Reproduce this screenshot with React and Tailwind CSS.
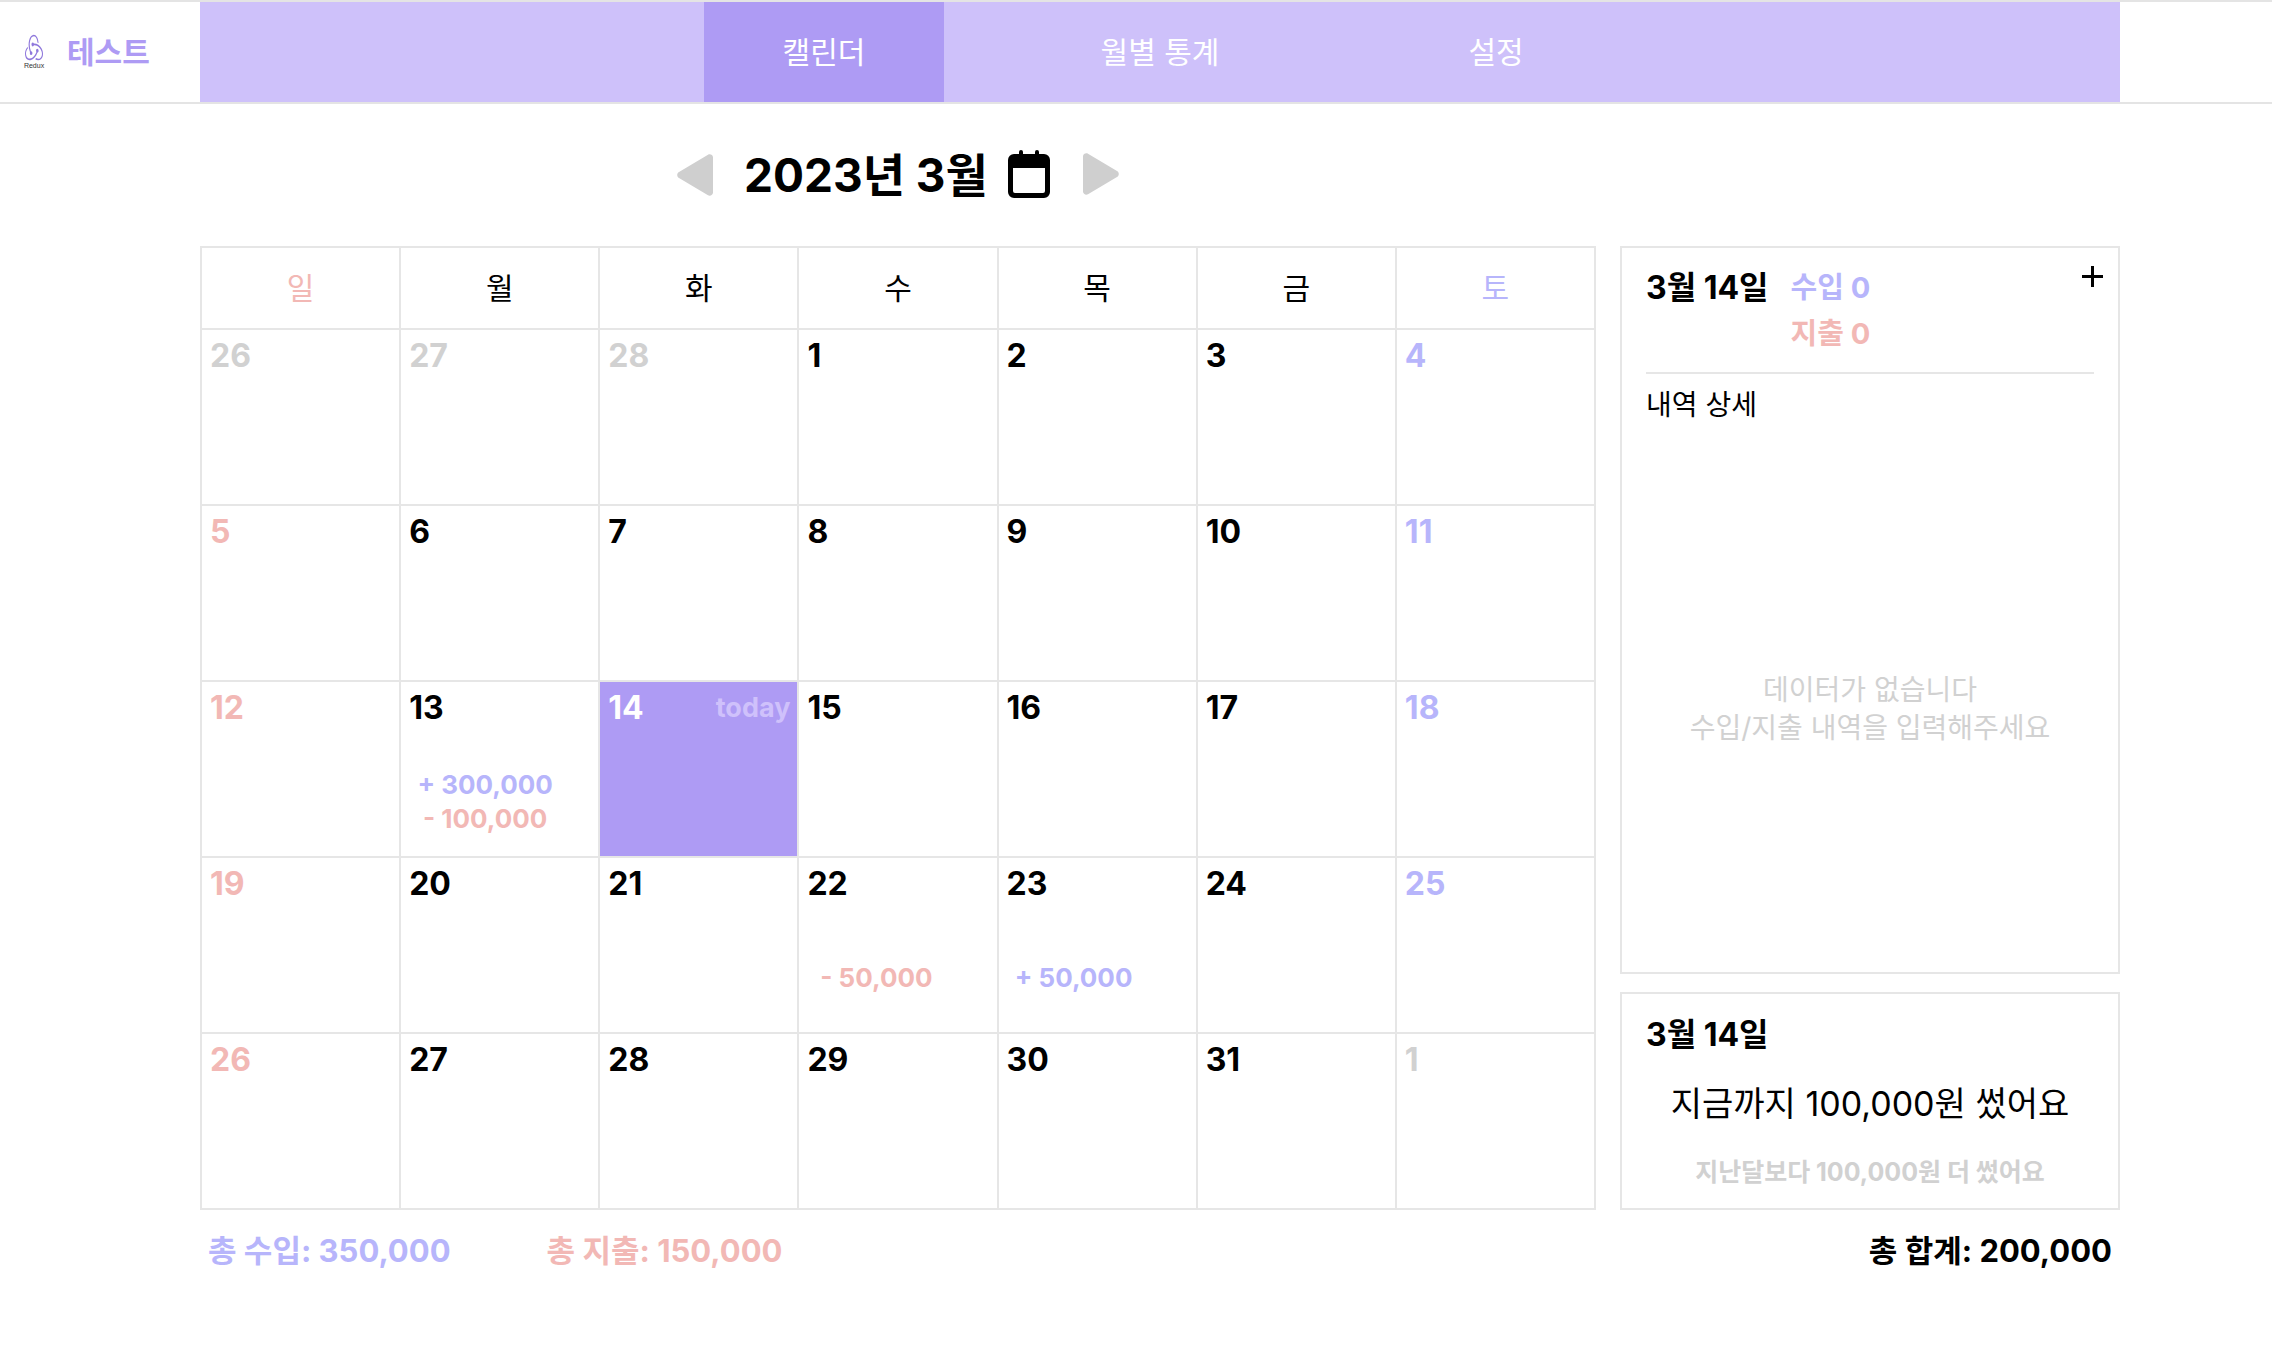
import { SiRedux } from "react-icons/si";

const DOW = [
  ["일", "text-[#f2b8b5]"], ["월", "text-black"], ["화", "text-black"], ["수", "text-black"],
  ["목", "text-black"], ["금", "text-black"], ["토", "text-[#b7b5fb]"],
];
const weeks = [
  [26, 27, 28, 1, 2, 3, 4],
  [5, 6, 7, 8, 9, 10, 11],
  [12, 13, 14, 15, 16, 17, 18],
  [19, 20, 21, 22, 23, 24, 25],
  [26, 27, 28, 29, 30, 31, 1],
];
const entries = {
  "2-1": { w: "w-[168px]", rows: [["+ 300,000", "text-[#b7b5fb]"], ["- 100,000", "text-[#f2b8b5]"]] },
  "3-3": { w: "w-[154px]", rows: [["- 50,000", "text-[#f2b8b5]"]] },
  "3-4": { w: "w-[150px]", rows: [["+ 50,000", "text-[#b7b5fb]"]] },
};

function Logo() {
  return (
    <div className="flex flex-col items-center w-[18px]">
      <SiRedux className="w-[18px] h-[27px] text-[#8f78dc]" preserveAspectRatio="none" />
      <span className="mt-[1px] text-[7px] leading-[8px] text-[#333] font-['Liberation_Sans',sans-serif]">Redux</span>
    </div>
  );
}

function Cell({ d, wi, di }) {
  const today = wi === 2 && di === 2;
  const muted = (wi === 0 && di < 3) || (wi === 4 && di === 6);
  let color = "text-black";
  if (muted) color = "text-[#d1d1d1]";
  else if (today) color = "text-white";
  else if (di === 0) color = "text-[#f2b8b5]";
  else if (di === 6) color = "text-[#b7b5fb]";
  const e = entries[`${wi}-${di}`];
  return (
    <div className={`relative flex flex-col h-[176px] border-l-2 border-b-2 border-[#e6e6e6] ${today ? "bg-[#ae9bf4]" : "bg-white"}`}>
      <div className={`pl-[8px] pt-[7px] text-[32px] leading-[38px] font-bold ${color}`}>{d}</div>
      {today && (
        <span className="absolute right-[7px] top-[10px] text-[27px] leading-[32px] font-bold text-[#cfc1fb]">today</span>
      )}
      {e && (
        <div className={`mt-auto mb-[20px] h-[68px] flex flex-col items-center justify-center ${e.w}`}>
          {e.rows.map(([t, c]) => (
            <div key={t} className={`text-[26px] leading-[34px] font-bold whitespace-nowrap ${c}`}>{t}</div>
          ))}
        </div>
      )}
    </div>
  );
}

export default function App() {
  return (
    <div className="h-[1366px] bg-white text-black font-['Inter','Noto_Sans_CJK_KR',sans-serif] overflow-hidden">
      <header className="flex h-[104px] border-t-2 border-b-2 border-[#e4e4e4]">
        <div className="w-[200px] flex items-center pl-[25px] gap-[24px]">
          <Logo />
          <span className="text-[30px] font-bold text-[#ae9bf4]">테스트</span>
        </div>
        <nav className="w-[1920px] bg-[#cec1fa] flex justify-center gap-[96px] text-white text-[30px]">
          <div className="w-[240px] bg-[#ae9bf4] flex items-center justify-center">캘린더</div>
          <div className="w-[240px] flex items-center justify-center">월별 통계</div>
          <div className="w-[240px] flex items-center justify-center">설정</div>
        </nav>
      </header>

      <main className="w-[1920px] ml-[200px]">
        <div className="h-[142px] pl-[477px] flex items-center">
          <svg width="36" height="42" viewBox="0 0 36 42" fill="#cfcfcf"><path d="M31 .8 2 18c-2.400 1.400-2.400 4.600 0 6l29 17.200c2 1.200 5-.2 5-2.700V3.500C36 1 33 -.4 31 .8z" /></svg>
          <span className="ml-[31px] text-[46px] font-bold leading-[58px]">2023년 3월</span>
          <svg className="ml-[20px] -translate-y-[1px]" width="42" height="48" viewBox="0 0 42 48" fill="#000">
            <path fillRule="evenodd" d="M6 4h5V2a2 2 0 0 1 4 0v2h12V2a2 2 0 0 1 4 0v2h5a6 6 0 0 1 6 6v32a6 6 0 0 1-6 6H6a6 6 0 0 1-6-6V10a6 6 0 0 1 6-6zM5 18v23a2 2 0 0 0 2 2h28a2 2 0 0 0 2-2V18z" />
          </svg>
          <svg className="ml-[33px] -translate-y-[1px]" width="36" height="42" viewBox="0 0 36 42" fill="#cfcfcf"><path d="M5 .8 34 18c2.400 1.400 2.400 4.600 0 6L5 41.200c-2 1.200-5-.2-5-2.700V3.500C0 1 3 -.4 5 .8z" /></svg>
        </div>

        <div className="flex gap-[24px]">
          <section className="w-[1396px]">
            <div className="border-t-2 border-r-2 border-[#e6e6e6]">
              <div className="grid grid-cols-7 h-[82px]">
                {DOW.map(([t, c]) => (
                  <div key={t} className={`flex items-center justify-center text-[30px] border-l-2 border-b-2 border-[#e6e6e6] ${c}`}>{t}</div>
                ))}
              </div>
              {weeks.map((w, wi) => (
                <div key={wi} className="grid grid-cols-7">
                  {w.map((d, di) => <Cell key={di} d={d} wi={wi} di={di} />)}
                </div>
              ))}
            </div>
            <div className="flex pl-[8px] pt-[21px] text-[31px] leading-[40px] font-bold">
              <span className="text-[#b7b5fb]">총 수입: 350,000</span>
              <span className="ml-[96px] text-[#f2b8b5]">총 지출: 150,000</span>
            </div>
          </section>

          <aside className="w-[500px]">
            <div className="relative h-[728px] border-2 border-[#e6e6e6] flex flex-col px-[24px]">
              <div className="flex pt-[17px] pb-[15px] border-b-2 border-[#e6e6e6] text-[32px] font-bold leading-[46px]">
                <span>3월 14일</span>
                <div className="ml-[22px] flex flex-col text-[29px]">
                  <span className="text-[#b7b5fb]">수입 0</span>
                  <span className="text-[#f2b8b5]">지출 0</span>
                </div>
              </div>
              <svg className="absolute right-[15px] top-[18px]" width="21" height="21" viewBox="0 0 21 21" fill="#000">
                <path d="M9 0h3v9h9v3h-9v9H9v-9H0V9h9z" />
              </svg>
              <div className="pt-[13px] text-[28px] leading-[36px]">내역 상세</div>
              <div className="flex-1 flex flex-col items-center justify-center text-[28px] leading-[38px] text-[#d1d1d1] pt-[22px]">
                <span>데이터가 없습니다</span>
                <span>수입/지출 내역을 입력해주세요</span>
              </div>
            </div>
            <div className="mt-[18px] h-[218px] border-2 border-[#e6e6e6] px-[24px] pt-[21px]">
              <div className="text-[32px] leading-[40px] font-bold">3월 14일</div>
              <div className="mt-[24px] text-center text-[34px] leading-[50px]">지금까지 100,000원 썼어요</div>
              <div className="mt-[26px] text-center text-[25px] leading-[34px] font-bold text-[#d1d1d1]">지난달보다 100,000원 더 썼어요</div>
            </div>
            <div className="pr-[8px] pt-[21px] text-right text-[31px] leading-[40px] font-bold">총 합계: 200,000</div>
          </aside>
        </div>
      </main>
    </div>
  );
}
